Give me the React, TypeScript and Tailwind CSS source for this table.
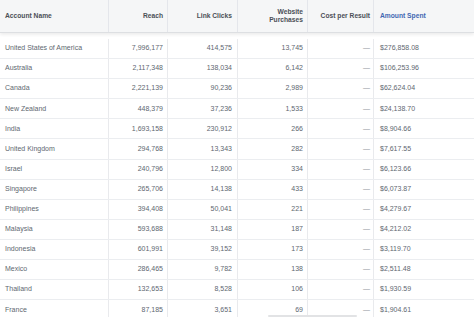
const rows: Array<[string, string, string, string, string]> = [
  ["United States of America", "7,996,177", "414,575", "13,745", "$276,858.08"],
  ["Australia", "2,117,348", "138,034", "6,142", "$106,253.96"],
  ["Canada", "2,221,139", "90,236", "2,989", "$62,624.04"],
  ["New Zealand", "448,379", "37,236", "1,533", "$24,138.70"],
  ["India", "1,693,158", "230,912", "266", "$8,904.66"],
  ["United Kingdom", "294,768", "13,343", "282", "$7,617.55"],
  ["Israel", "240,796", "12,800", "334", "$6,123.66"],
  ["Singapore", "265,706", "14,138", "433", "$6,073.87"],
  ["Philippines", "394,408", "50,041", "221", "$4,279.67"],
  ["Malaysia", "593,688", "31,148", "187", "$4,212.02"],
  ["Indonesia", "601,991", "39,152", "173", "$3,119.70"],
  ["Mexico", "286,465", "9,782", "138", "$2,511.48"],
  ["Thailand", "132,653", "8,528", "106", "$1,930.59"],
  ["France", "87,185", "3,651", "69", "$1,904.61"],
];

const cols = "grid grid-cols-[109px_59px_70px_70px_66px_1fr]";

const App = () => {
  return (
    <div className="relative w-[474px] h-[317px] overflow-hidden bg-white font-['Liberation_Sans',Arial,sans-serif]">
      {/* header */}
      <div
        className={`${cols} relative z-10 h-[33px] bg-[#f5f6f7] border-b border-[#dddfe2] shadow-[0_2px_3px_rgba(0,0,0,0.07)] text-[6.7px] font-bold text-[#4b4f56] leading-[8px]`}
      >
        <div className="flex items-center pl-[5px] border-r border-[#e4e6eb]">Account Name</div>
        <div className="flex items-center justify-end pr-[4px] border-r border-[#e4e6eb]">Reach</div>
        <div className="flex items-center justify-end pr-[5px] border-r border-[#e4e6eb]">Link Clicks</div>
        <div className="flex items-center justify-end text-right pr-[4px] border-r border-[#e4e6eb]">
          Website
          <br />
          Purchases
        </div>
        <div className="flex items-center justify-end pr-[3px] border-r border-[#e4e6eb]">Cost per Result</div>
        <div className="flex items-center pl-[6px] text-[#4267b2]">Amount Spent</div>
      </div>

      {/* body */}
      <div className="pt-[6px] text-[7px] text-[#606770]">
        {rows.map(([name, reach, clicks, purchases, spent]) => (
          <div key={name} className={`${cols} h-[20.1px] border-b border-[#ebedf0]`}>
            <div className="flex items-center pl-[5px] border-r border-[#e9eaed]">{name}</div>
            <div className="flex items-center justify-end pr-[4px] border-r border-[#e9eaed]">{reach}</div>
            <div className="flex items-center justify-end pr-[5px] border-r border-[#e9eaed]">{clicks}</div>
            <div className="flex items-center justify-end pr-[4px] border-r border-[#e9eaed]">{purchases}</div>
            <div className="flex items-center justify-end pr-[3px] border-r border-[#e9eaed] text-[#90949c]">—</div>
            <div className="flex items-center pl-[6px]">{spent}</div>
          </div>
        ))}
      </div>

      {/* scrollbar thumb */}
      <div className="absolute bottom-0 left-[268px] w-[89px] h-[2px] rounded-full bg-[#e2e3e5]" />
    </div>
  );
};

export default App;
